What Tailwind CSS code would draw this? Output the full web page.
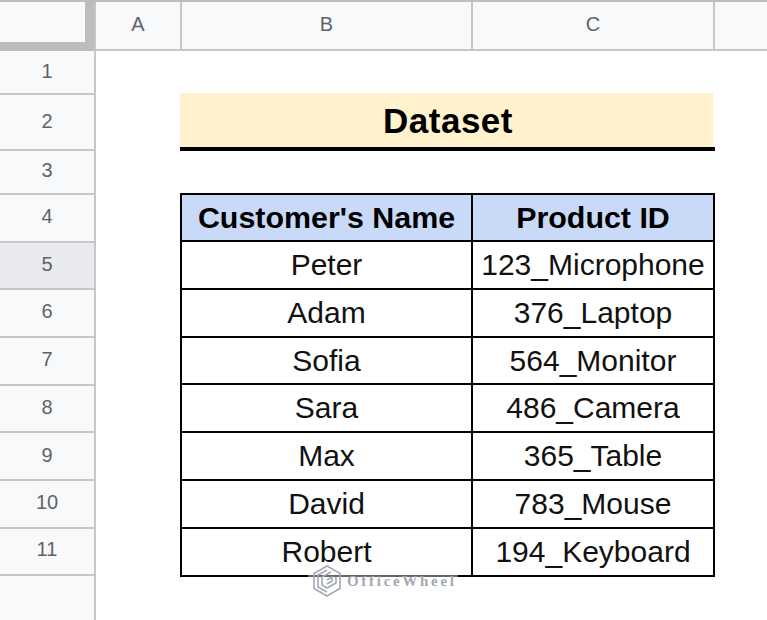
<!DOCTYPE html>
<html lang="en">
<head>
    <meta charset="UTF-8">
    <title>Dataset</title>
    <script src="https://cdn.jsdelivr.net/npm/@tailwindcss/browser@4"></script>
</head>
<body class="bg-white w-[767px] h-[620px] overflow-hidden font-['Liberation_Sans',Arial,sans-serif]">
    <div class="relative h-[620px] flex flex-col">
        <!-- column headers -->
        <div class="h-[2px] bg-[#bdbdbd]"></div>
        <div class="flex h-[49px] text-[20px] text-[#5f6368]">
            <div class="w-[94px] border-r-[9px] border-b-[9px] border-[#bdbdbd] bg-[#f8f9fa]"></div>
            <div class="w-[2px] bg-[#c7c7c7]"></div>
            <div class="w-[86px] flex items-center justify-center bg-[#f8f9fa] border-b-2 border-r-2 border-[#c7c7c7] pb-[3px]">A</div>
            <div class="w-[291px] flex items-center justify-center bg-[#f8f9fa] border-b-2 border-r-2 border-[#c7c7c7] pb-[3px]">B</div>
            <div class="w-[242px] flex items-center justify-center bg-[#f8f9fa] border-b-2 border-r-2 border-[#c7c7c7] pb-[3px]">C</div>
            <div class="flex-1 bg-[#f8f9fa] border-b-2 border-[#c7c7c7]"></div>
        </div>
        <div class="flex flex-1">
            <!-- row headers -->
            <div class="w-[96px] flex flex-col bg-[#f8f9fa] border-r-2 border-[#c7c7c7] text-[20px] text-[#5f6368]">
                <div class="h-[44px] flex items-center justify-center border-b-2 border-[#c7c7c7] pb-[2px]">1</div>
                <div class="h-[56px] flex items-center justify-center border-b-2 border-[#c7c7c7] pb-[2px]">2</div>
                <div class="h-[44px] flex items-center justify-center border-b-2 border-[#c7c7c7] pb-[4px]">3</div>
                <div class="h-[48px] flex items-center justify-center border-b-2 border-[#c7c7c7] pb-[4px]">4</div>
                <div class="h-[47px] flex items-center justify-center border-b-2 border-[#c7c7c7] pb-[4px] bg-[#e8eaed]">5</div>
                <div class="h-[48px] flex items-center justify-center border-b-2 border-[#c7c7c7] pb-[4px]">6</div>
                <div class="h-[48px] flex items-center justify-center border-b-2 border-[#c7c7c7] pb-[4px]">7</div>
                <div class="h-[47px] flex items-center justify-center border-b-2 border-[#c7c7c7] pb-[4px]">8</div>
                <div class="h-[48px] flex items-center justify-center border-b-2 border-[#c7c7c7] pb-[3px]">9</div>
                <div class="h-[48px] flex items-center justify-center border-b-2 border-[#c7c7c7] pb-[4px]">10</div>
                <div class="h-[47px] flex items-center justify-center border-b-2 border-[#c7c7c7] pb-[5px]">11</div>
            </div>
            <!-- sheet content -->
            <div class="pl-[84px] pt-[42px] text-black">
                <div class="w-[535px] h-[58px]">
                    <div class="w-[533px] h-[54px] flex items-center justify-center bg-[#fff2cc] text-[35px] font-bold pt-[2px] pl-[3px] tracking-[0.5px]">Dataset</div>
                    <div class="h-[4px] bg-black"></div>
                </div>
                <div class="w-[535px] mt-[42px] border-2 border-black text-[30px] text-[#111]">
                    <div class="grid grid-cols-[291px_240px] h-[47px] border-b-2 border-black bg-[#c9daf8] font-bold text-black text-[30.4px]">
                        <div class="flex items-center justify-center border-r-2 border-black pb-[1px]">Customer's Name</div>
                        <div class="flex items-center justify-center pb-[1px]">Product ID</div>
                    </div>
                    <div class="grid grid-cols-[291px_240px] h-[48px] border-b-2 border-black">
                        <div class="flex items-center justify-center border-r-2 border-black pb-[2px]">Peter</div>
                        <div class="flex items-center justify-center pb-[2px]">123_Microphone</div>
                    </div>
                    <div class="grid grid-cols-[291px_240px] h-[48px] border-b-2 border-black">
                        <div class="flex items-center justify-center border-r-2 border-black pb-[2px]">Adam</div>
                        <div class="flex items-center justify-center pb-[2px]">376_Laptop</div>
                    </div>
                    <div class="grid grid-cols-[291px_240px] h-[47px] border-b-2 border-black">
                        <div class="flex items-center justify-center border-r-2 border-black pb-[2px]">Sofia</div>
                        <div class="flex items-center justify-center pb-[2px]">564_Monitor</div>
                    </div>
                    <div class="grid grid-cols-[291px_240px] h-[48px] border-b-2 border-black">
                        <div class="flex items-center justify-center border-r-2 border-black pb-[2px]">Sara</div>
                        <div class="flex items-center justify-center pb-[2px]">486_Camera</div>
                    </div>
                    <div class="grid grid-cols-[291px_240px] h-[48px] border-b-2 border-black">
                        <div class="flex items-center justify-center border-r-2 border-black pb-[2px]">Max</div>
                        <div class="flex items-center justify-center pb-[2px]">365_Table</div>
                    </div>
                    <div class="grid grid-cols-[291px_240px] h-[48px] border-b-2 border-black">
                        <div class="flex items-center justify-center border-r-2 border-black pb-[2px]">David</div>
                        <div class="flex items-center justify-center pb-[2px]">783_Mouse</div>
                    </div>
                    <div class="grid grid-cols-[291px_240px] h-[46px]">
                        <div class="flex items-center justify-center border-r-2 border-black pb-[3px]">Robert</div>
                        <div class="flex items-center justify-center pb-[3px]">194_Keyboard</div>
                    </div>
                </div>
            </div>
        </div>
        <!-- watermark -->
        <div class="absolute left-[308px] top-[563px] w-[150px] h-[36px] bg-white/40 flex items-center gap-[5px] pl-[4px]">
            <svg width="30" height="34" viewBox="0 0 30 34" fill="none" stroke="#a3a9b3" stroke-width="1.6">
                <path d="M15 2 L28 9.5 V24.5 L15 32 L2 24.5 V9.5 Z"/>
                <path d="M15 6 L6 11 V23 L15 28"/>
                <path d="M19 8 L10 13 V21 L15 24 L24 19 V13"/>
                <path d="M15 20 L20 17 V13 L15 16"/>
            </svg>
            <span class="font-['Liberation_Serif',serif] font-bold text-[15px] tracking-[2.7px] text-[#a3a9b3]">OfficeWheel</span>
        </div>
    </div>
</body>
</html>
